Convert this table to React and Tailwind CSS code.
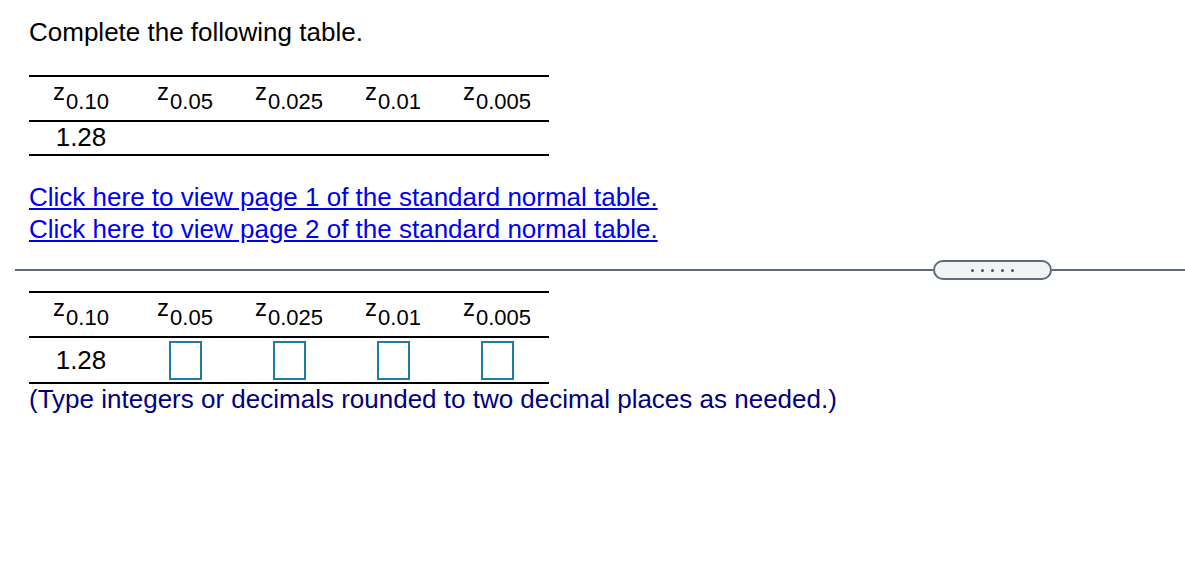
import React from 'react';

const heads = ['0.10', '0.05', '0.025', '0.01', '0.005'];

function Z({ sub }) {
  return (
    <span className="text-[24px] leading-[26px]">
      z<span className="text-[22px] leading-[22px] align-[-9px] ml-px">{sub}</span>
    </span>
  );
}

function HeaderRow() {
  return (
    <div className="flex h-[43px]">
      {heads.map((h) => (
        <div key={h} className="w-[104px] flex justify-center pt-[2px]">
          <Z sub={h} />
        </div>
      ))}
    </div>
  );
}

export default function App() {
  return (
    <div className="min-h-screen bg-white text-black font-['Liberation_Sans',Arial,sans-serif] text-[26px]">
      <div className="pl-[29px] pt-[17px]">
        <p className="leading-[30px]">Complete the following table.</p>

        {/* given table */}
        <div className="mt-[28px] w-[520px] border-t-2 border-black">
          <HeaderRow />
          <div className="flex h-[36px] border-t-2 border-b-2 border-black">
            <div className="w-[104px] text-center leading-[31px]">1.28</div>
          </div>
        </div>

        <div className="mt-[25px] flex flex-col items-start text-[#0000ee]">
          <a href="#" className="underline leading-[32px]">Click here to view page 1 of the standard normal table.</a>
          <a href="#" className="underline leading-[32px]">Click here to view page 2 of the standard normal table.</a>
        </div>
      </div>

      {/* divider with expand pill */}
      <div className="mt-[15px] ml-[15px] flex items-center h-[20px]">
        <div className="w-[918px] h-[2px] bg-[#5f6b7a]" />
        <button className="w-[119px] h-[20px] rounded-full border-2 border-[#5f6b7a] bg-[#f2f3f5] flex items-center justify-center gap-[7px]">
          {[0, 1, 2, 3, 4].map((i) => (
            <span key={i} className="w-[3px] h-[3px] rounded-full bg-[#4b5563]" />
          ))}
        </button>
        <div className="flex-1 h-[2px] bg-[#5f6b7a]" />
      </div>

      <div className="pl-[29px] mt-[11px]">
        {/* answer table */}
        <div className="w-[520px] border-t-2 border-black">
          <HeaderRow />
          <div className="flex h-[48px] items-center border-t-2 border-b-2 border-black">
            <div className="w-[104px] text-center leading-[30px]">1.28</div>
            {[1, 2, 3, 4].map((i) => (
              <div key={i} className="w-[104px] flex justify-center">
                <input
                  type="text"
                  className="w-[33px] h-[39px] border-2 border-[#1a7fa3] bg-white outline-none"
                />
              </div>
            ))}
          </div>
        </div>
        <p className="leading-[30px] text-[#000080]">(Type integers or decimals rounded to two decimal places as needed.)</p>
      </div>
    </div>
  );
}
